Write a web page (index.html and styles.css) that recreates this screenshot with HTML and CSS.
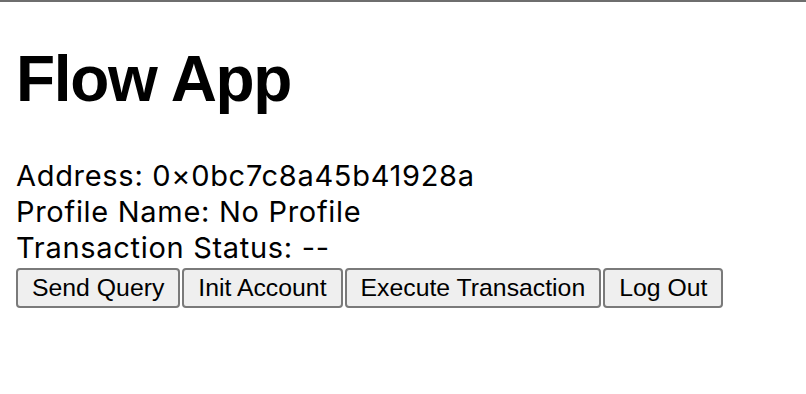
FILE: index.html
```html
<!DOCTYPE html>
<html>
<head>
<meta charset="utf-8">
<link rel="stylesheet" href="styles.css">
</head>
<body>
<div class="topbar"></div>
<main class="app">
  <h1 class="title">Flow App</h1>
  <div class="info">
    <div class="line">Address: 0×0bc7c8a45b41928a</div>
    <div class="line">Profile Name: No Profile</div>
    <div class="line">Transaction Status: --</div>
  </div>
  <div class="actions">
    <button class="btn">Send Query</button>
    <button class="btn">Init Account</button>
    <button class="btn">Execute Transaction</button>
    <button class="btn">Log Out</button>
  </div>
</main>
</body>
</html>
```

FILE: styles.css
```css
html, body {
  margin: 0;
  padding: 0;
  background: #ffffff;
}
body {
  font-family: "Liberation Sans", Arial, sans-serif;
  color: #000;
}
.topbar {
  height: 2px;
  background: #6e6e6e;
}
.app {
  padding: 0 16px;
}
.title {
  font-size: 64px;
  font-weight: bold;
  line-height: 74px;
  letter-spacing: -1.3px;
  margin: 40px 0 42px 0;
}
.info {
  font-family: Inter, "Liberation Sans", sans-serif;
  font-size: 29px;
  line-height: 36px;
  letter-spacing: 0.7px;
}
.actions {
  margin-top: 2px;
  display: flex;
  gap: 2px;
}
.btn {
  font-family: "Liberation Sans", Arial, sans-serif;
  font-size: 24.8px;
  height: 40px;
  padding: 0 14px;
  background: #efefef;
  border: 2px solid #7a7a7a;
  border-radius: 4px;
  color: #000;
}
```
